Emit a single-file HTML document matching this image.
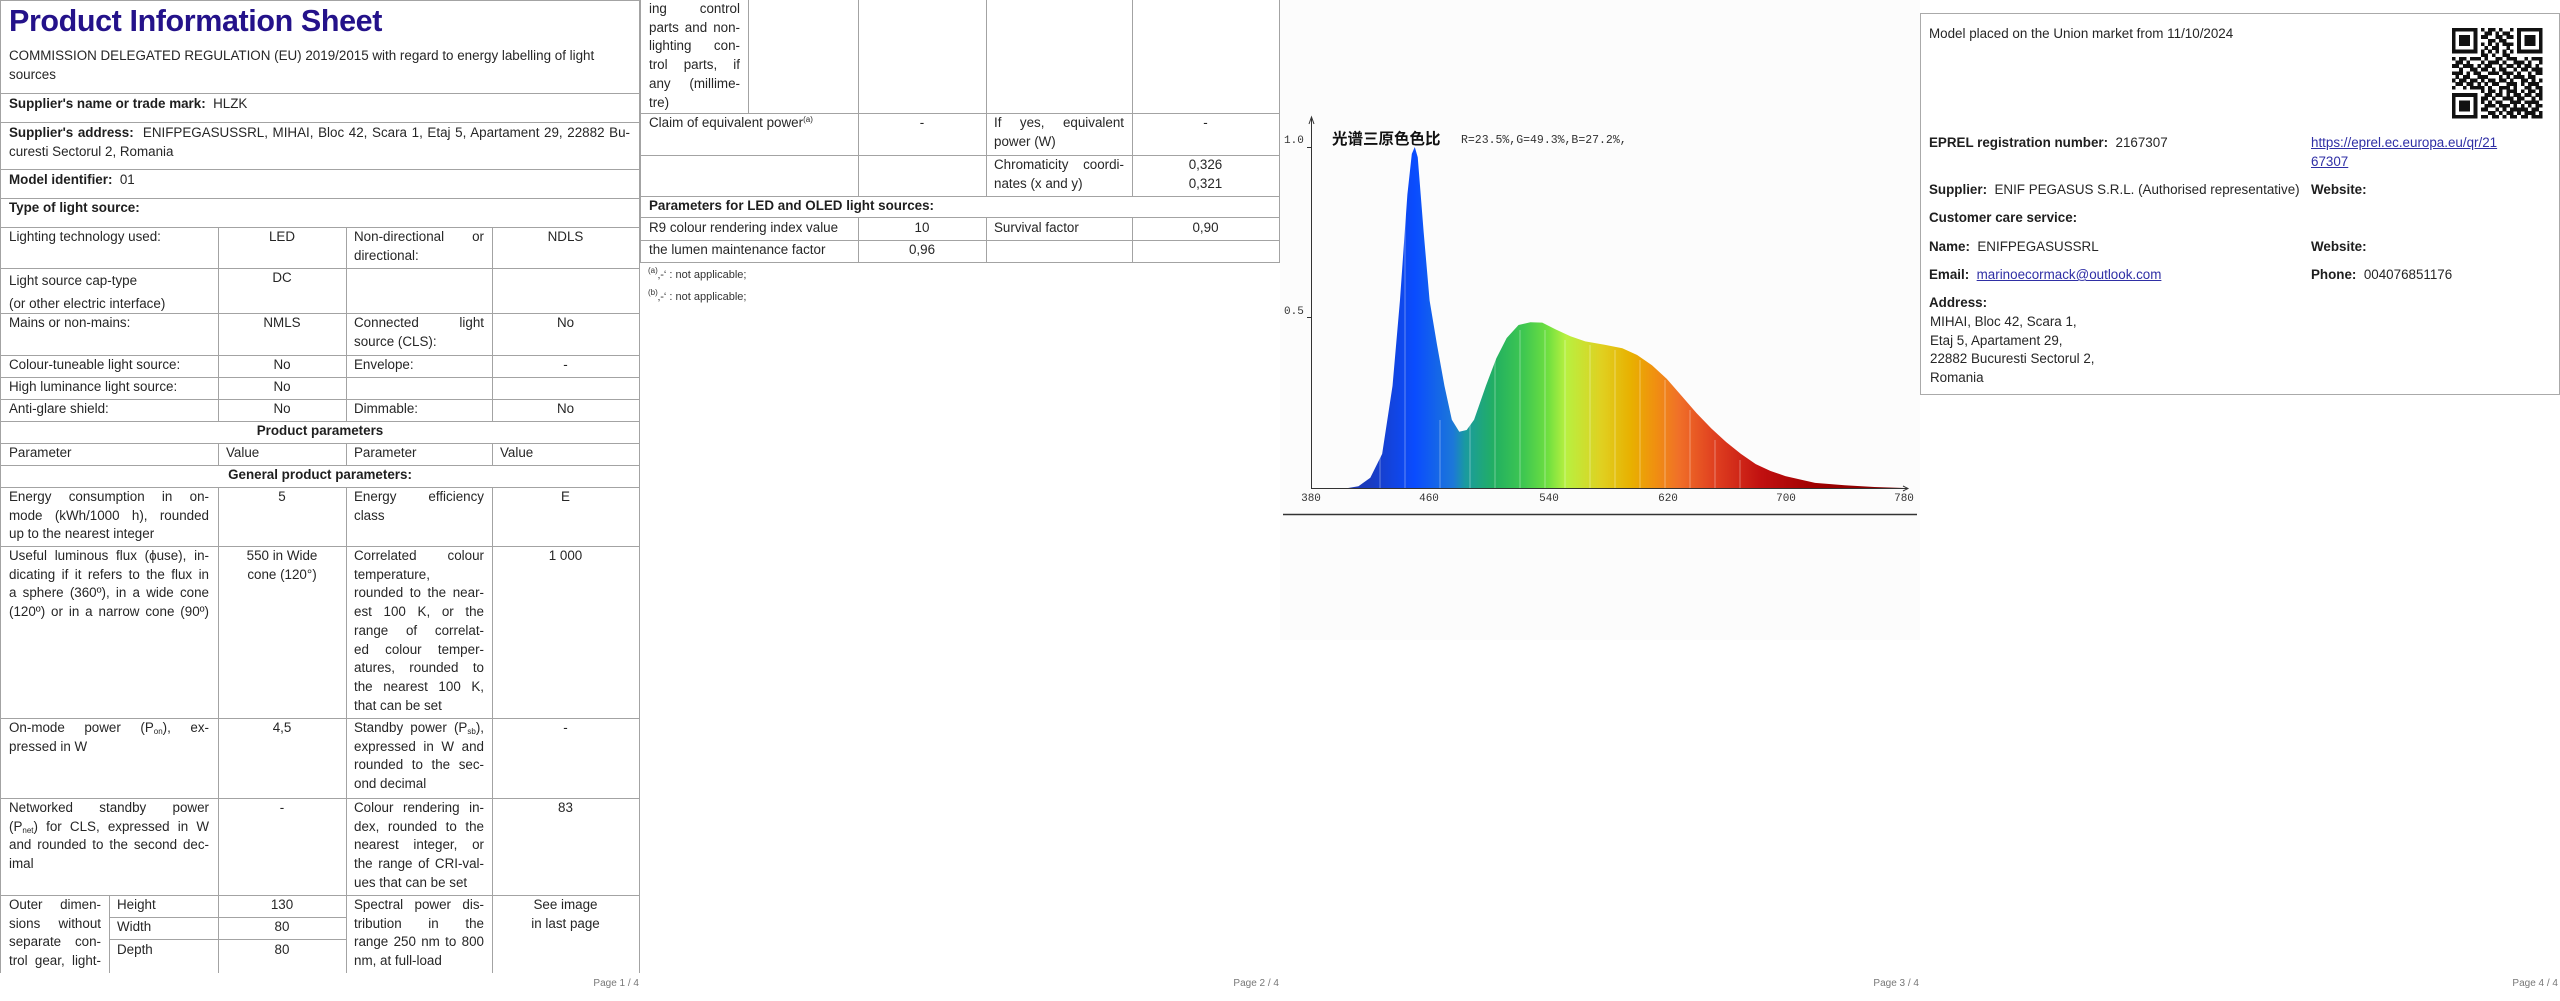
<!DOCTYPE html>
<html><head><meta charset="utf-8">
<style>
*{margin:0;padding:0;box-sizing:border-box}
html,body{width:2560px;height:1001px;background:#fff;overflow:hidden}
body{position:relative;font-family:"Liberation Sans","Noto Sans CJK SC",sans-serif;font-size:13.4px;color:#262626}
.h{position:absolute;height:1px;background:#a3a3a3}
.v{position:absolute;width:1px;background:#a3a3a3}
.t{position:absolute;line-height:18.7px;white-space:nowrap}
.j{display:block;text-align:justify;text-align-last:justify}
.c{text-align:center}
b{font-weight:bold;color:#1e1e1e}
.pg{position:absolute;top:978px;font-size:10px;color:#777;text-align:right;width:100px}
sub{font-size:8px;vertical-align:-2px;line-height:0}
sup{font-size:8px;vertical-align:5px;line-height:0}
a{color:#2f2fa5;text-decoration:underline}
</style></head><body>

<!-- ============ PAGE 1 ============ -->
<div class="v" style="left:0;top:0;height:973px"></div>
<div class="v" style="left:639px;top:0;height:973px"></div>
<div class="h" style="left:0;top:0;width:640px"></div>
<div class="h" style="left:0;top:93px;width:640px"></div>
<div class="h" style="left:0;top:122px;width:640px"></div>
<div class="h" style="left:0;top:169px;width:640px"></div>
<div class="h" style="left:0;top:198px;width:640px"></div>
<div class="h" style="left:0;top:227px;width:640px"></div>
<div class="h" style="left:0;top:268px;width:640px"></div>
<div class="h" style="left:0;top:313px;width:640px"></div>
<div class="h" style="left:0;top:355px;width:640px"></div>
<div class="h" style="left:0;top:377px;width:640px"></div>
<div class="h" style="left:0;top:399px;width:640px"></div>
<div class="h" style="left:0;top:421px;width:640px"></div>
<div class="h" style="left:0;top:443px;width:640px"></div>
<div class="h" style="left:0;top:465px;width:640px"></div>
<div class="h" style="left:0;top:487px;width:640px"></div>
<div class="h" style="left:0;top:546px;width:640px"></div>
<div class="h" style="left:0;top:718px;width:640px"></div>
<div class="h" style="left:0;top:798px;width:640px"></div>
<div class="h" style="left:0;top:895px;width:640px"></div>
<div class="h" style="left:109px;top:917px;width:237px"></div>
<div class="h" style="left:109px;top:939px;width:237px"></div>
<div class="v" style="left:218px;top:227px;height:194px"></div>
<div class="v" style="left:346px;top:227px;height:194px"></div>
<div class="v" style="left:492px;top:227px;height:194px"></div>
<div class="v" style="left:218px;top:443px;height:22px"></div>
<div class="v" style="left:346px;top:443px;height:22px"></div>
<div class="v" style="left:492px;top:443px;height:22px"></div>
<div class="v" style="left:218px;top:487px;height:486px"></div>
<div class="v" style="left:346px;top:487px;height:486px"></div>
<div class="v" style="left:492px;top:487px;height:486px"></div>
<div class="v" style="left:109px;top:895px;height:78px"></div>

<div class="t" style="left:9px;top:1px;font-size:30.5px;line-height:40px;font-weight:bold;color:#24128a;letter-spacing:-0.4px">Product Information Sheet</div>
<div class="t" style="left:9px;top:47px">COMMISSION DELEGATED REGULATION (EU) 2019/2015 with regard to energy labelling of light<br>sources</div>
<div class="t" style="left:9px;top:95px"><b>Supplier's name or trade mark:</b>&nbsp; HLZK</div>
<div class="t" style="left:9px;top:124px;width:621px"><span class="j"><b>Supplier's address:</b>&nbsp; ENIFPEGASUSSRL, MIHAI, Bloc 42, Scara 1, Etaj 5, Apartament 29, 22882 Bu-</span>curesti Sectorul 2, Romania</div>
<div class="t" style="left:9px;top:171px"><b>Model identifier:</b>&nbsp; 01</div>
<div class="t" style="left:9px;top:199px"><b>Type of light source:</b></div>

<div class="t" style="left:9px;top:228px">Lighting technology used:</div>
<div class="t c" style="left:218px;top:228px;width:128px">LED</div>
<div class="t" style="left:354px;top:228px;width:130px"><span class="j">Non-directional or</span>directional:</div>
<div class="t c" style="left:492px;top:228px;width:147px">NDLS</div>

<div class="t" style="left:9px;top:269px;line-height:23px">Light source cap-type<br>(or other electric interface)</div>
<div class="t c" style="left:218px;top:269px;width:128px">DC</div>

<div class="t" style="left:9px;top:314px">Mains or non-mains:</div>
<div class="t c" style="left:218px;top:314px;width:128px">NMLS</div>
<div class="t" style="left:354px;top:314px;width:130px"><span class="j">Connected light</span>source (CLS):</div>
<div class="t c" style="left:492px;top:314px;width:147px">No</div>

<div class="t" style="left:9px;top:356px">Colour-tuneable light source:</div>
<div class="t c" style="left:218px;top:356px;width:128px">No</div>
<div class="t" style="left:354px;top:356px">Envelope:</div>
<div class="t c" style="left:492px;top:356px;width:147px">-</div>

<div class="t" style="left:9px;top:378px">High luminance light source:</div>
<div class="t c" style="left:218px;top:378px;width:128px">No</div>

<div class="t" style="left:9px;top:400px">Anti-glare shield:</div>
<div class="t c" style="left:218px;top:400px;width:128px">No</div>
<div class="t" style="left:354px;top:400px">Dimmable:</div>
<div class="t c" style="left:492px;top:400px;width:147px">No</div>

<div class="t c" style="left:0;top:422px;width:640px"><b>Product parameters</b></div>
<div class="t" style="left:9px;top:444px">Parameter</div>
<div class="t" style="left:226px;top:444px">Value</div>
<div class="t" style="left:354px;top:444px">Parameter</div>
<div class="t" style="left:500px;top:444px">Value</div>
<div class="t c" style="left:0;top:466px;width:640px"><b>General product parameters:</b></div>

<div class="t" style="left:9px;top:488px;width:200px"><span class="j">Energy consumption in on-</span><span class="j">mode (kWh/1000 h), rounded</span>up to the nearest integer</div>
<div class="t c" style="left:218px;top:488px;width:128px">5</div>
<div class="t" style="left:354px;top:488px;width:130px"><span class="j">Energy efficiency</span>class</div>
<div class="t c" style="left:492px;top:488px;width:147px">E</div>

<div class="t" style="left:9px;top:547px;width:200px"><span class="j">Useful luminous flux (ϕuse), in-</span><span class="j">dicating if it refers to the flux in</span><span class="j">a sphere (360º), in a wide cone</span><span class="j">(120º) or in a narrow cone (90º)</span></div>
<div class="t c" style="left:218px;top:547px;width:128px">550 in Wide<br>cone (120°)</div>
<div class="t" style="left:354px;top:547px;width:130px"><span class="j">Correlated colour</span>temperature,<span class="j">rounded to the near-</span><span class="j">est 100 K, or the</span><span class="j">range of correlat-</span><span class="j">ed colour temper-</span><span class="j">atures, rounded to</span><span class="j">the nearest 100 K,</span>that can be set</div>
<div class="t c" style="left:492px;top:547px;width:147px">1 000</div>

<div class="t" style="left:9px;top:719px;width:200px"><span class="j">On-mode power (P<sub>on</sub>), ex-</span>pressed in W</div>
<div class="t c" style="left:218px;top:719px;width:128px">4,5</div>
<div class="t" style="left:354px;top:719px;width:130px"><span class="j">Standby power (P<sub>sb</sub>),</span><span class="j">expressed in W and</span><span class="j">rounded to the sec-</span>ond decimal</div>
<div class="t c" style="left:492px;top:719px;width:147px">-</div>

<div class="t" style="left:9px;top:799px;width:200px"><span class="j">Networked standby power</span><span class="j">(P<sub>net</sub>) for CLS, expressed in W</span><span class="j">and rounded to the second dec-</span>imal</div>
<div class="t c" style="left:218px;top:799px;width:128px">-</div>
<div class="t" style="left:354px;top:799px;width:130px"><span class="j">Colour rendering in-</span><span class="j">dex, rounded to the</span><span class="j">nearest integer, or</span><span class="j">the range of CRI-val-</span>ues that can be set</div>
<div class="t c" style="left:492px;top:799px;width:147px">83</div>

<div class="t" style="left:9px;top:896px;width:92px"><span class="j">Outer dimen-</span><span class="j">sions without</span><span class="j">separate con-</span><span class="j">trol gear, light-</span></div>
<div class="t" style="left:117px;top:896px">Height</div>
<div class="t" style="left:117px;top:918px">Width</div>
<div class="t" style="left:117px;top:941px">Depth</div>
<div class="t c" style="left:218px;top:896px;width:128px">130</div>
<div class="t c" style="left:218px;top:918px;width:128px">80</div>
<div class="t c" style="left:218px;top:941px;width:128px">80</div>
<div class="t" style="left:354px;top:896px;width:130px"><span class="j">Spectral power dis-</span><span class="j">tribution in the</span><span class="j">range 250 nm to 800</span>nm, at full-load</div>
<div class="t c" style="left:492px;top:896px;width:147px">See image<br>in last page</div>
<div class="pg" style="left:539px">Page 1 / 4</div>

<!-- ============ PAGE 2 ============ -->
<div class="v" style="left:640px;top:0;height:263px"></div>
<div class="v" style="left:1279px;top:0;height:263px"></div>
<div class="v" style="left:748px;top:0;height:113px"></div>
<div class="v" style="left:858px;top:0;height:196px"></div>
<div class="v" style="left:986px;top:0;height:196px"></div>
<div class="v" style="left:1132px;top:0;height:196px"></div>
<div class="v" style="left:858px;top:217px;height:45px"></div>
<div class="v" style="left:986px;top:217px;height:45px"></div>
<div class="v" style="left:1132px;top:217px;height:45px"></div>
<div class="h" style="left:640px;top:113px;width:640px"></div>
<div class="h" style="left:640px;top:155px;width:640px"></div>
<div class="h" style="left:640px;top:196px;width:640px"></div>
<div class="h" style="left:640px;top:217px;width:640px"></div>
<div class="h" style="left:640px;top:240px;width:640px"></div>
<div class="h" style="left:640px;top:262px;width:640px"></div>

<div class="t" style="left:649px;top:0;width:91px"><span class="j">ing control</span><span class="j">parts and non-</span><span class="j">lighting con-</span><span class="j">trol parts, if</span><span class="j">any (millime-</span>tre)</div>
<div class="t" style="left:649px;top:114px">Claim of equivalent power<sup>(a)</sup></div>
<div class="t c" style="left:858px;top:114px;width:128px">-</div>
<div class="t" style="left:994px;top:114px;width:130px"><span class="j">If yes, equivalent</span>power (W)</div>
<div class="t c" style="left:1132px;top:114px;width:147px">-</div>
<div class="t" style="left:994px;top:156px;width:130px"><span class="j">Chromaticity coordi-</span>nates (x and y)</div>
<div class="t c" style="left:1132px;top:156px;width:147px">0,326<br>0,321</div>
<div class="t" style="left:649px;top:197px"><b>Parameters for LED and OLED light sources:</b></div>
<div class="t" style="left:649px;top:219px">R9 colour rendering index value</div>
<div class="t c" style="left:858px;top:219px;width:128px">10</div>
<div class="t" style="left:994px;top:219px">Survival factor</div>
<div class="t c" style="left:1132px;top:219px;width:147px">0,90</div>
<div class="t" style="left:649px;top:241px">the lumen maintenance factor</div>
<div class="t c" style="left:858px;top:241px;width:128px">0,96</div>
<div class="t" style="left:648px;top:264px;font-size:11px;line-height:22px;color:#333"><sup>(a)</sup>‚-‘ : not applicable;<br><sup>(b)</sup>‚-‘ : not applicable;</div>
<div class="pg" style="left:1179px">Page 2 / 4</div>

<!-- ============ PAGE 3 ============ -->
<div style="position:absolute;left:1280px;top:0;width:640px;height:640px;background:#fcfcfc"></div>
<svg style="position:absolute;left:0;top:0" width="2560" height="1001" viewBox="0 0 2560 1001">
<defs>
<linearGradient id="sp" gradientUnits="userSpaceOnUse" x1="380" y1="0" x2="780" y2="0">
<stop offset="0" stop-color="#2030a0"/>
<stop offset="0.1" stop-color="#1a3cc0"/>
<stop offset="0.175" stop-color="#0a4cff"/>
<stop offset="0.24" stop-color="#1c78d8"/>
<stop offset="0.26" stop-color="#1a9aa0"/>
<stop offset="0.31" stop-color="#22b060"/>
<stop offset="0.36" stop-color="#40c850"/>
<stop offset="0.4" stop-color="#70e040"/>
<stop offset="0.43" stop-color="#b8f040"/>
<stop offset="0.49" stop-color="#e0d020"/>
<stop offset="0.54" stop-color="#e8b000"/>
<stop offset="0.58" stop-color="#f09010"/>
<stop offset="0.62" stop-color="#f07028"/>
<stop offset="0.68" stop-color="#e04020"/>
<stop offset="0.76" stop-color="#c01010"/>
<stop offset="0.85" stop-color="#a00000"/>
<stop offset="1" stop-color="#800000"/>
</linearGradient>
</defs>
<g transform="translate(747.65,488) scale(1.4825,-341)">
<path fill="url(#sp)" d="M380 0 L405 0 L412 0.005 L420 0.03 L428 0.1 L435 0.3 L440 0.55 L445 0.86 L448 0.98 L450 1 L452 0.97 L456 0.75 L460 0.55 L465 0.42 L470 0.3 L475 0.2 L480 0.165 L485 0.17 L490 0.2 L498 0.3 L505 0.38 L512 0.44 L520 0.478 L528 0.486 L536 0.485 L545 0.465 L555 0.445 L565 0.43 L578 0.42 L590 0.41 L600 0.39 L610 0.36 L620 0.32 L630 0.27 L640 0.22 L650 0.175 L660 0.135 L670 0.1 L680 0.07 L690 0.05 L700 0.035 L710 0.025 L720 0.015 L740 0.008 L760 0.003 L780 0 Z"/>
</g>
<g stroke="#fff" stroke-opacity="0.18" stroke-width="2">
<line x1="1380" y1="488" x2="1380" y2="300"/><line x1="1405" y1="488" x2="1405" y2="150"/><line x1="1440" y1="488" x2="1440" y2="420"/><line x1="1470" y1="488" x2="1470" y2="360"/><line x1="1495" y1="488" x2="1495" y2="330"/><line x1="1520" y1="488" x2="1520" y2="330"/><line x1="1545" y1="488" x2="1545" y2="330"/><line x1="1565" y1="488" x2="1565" y2="340"/><line x1="1590" y1="488" x2="1590" y2="345"/><line x1="1615" y1="488" x2="1615" y2="350"/><line x1="1640" y1="488" x2="1640" y2="360"/><line x1="1665" y1="488" x2="1665" y2="380"/><line x1="1690" y1="488" x2="1690" y2="410"/><line x1="1715" y1="488" x2="1715" y2="440"/><line x1="1740" y1="488" x2="1740" y2="460"/>
</g>
<line x1="1311.5" y1="118" x2="1311.5" y2="488" stroke="#333" stroke-width="1"/>
<line x1="1311" y1="488.5" x2="1907" y2="488.5" stroke="#333" stroke-width="1"/>
<path d="M1309 124 L1311.5 117 L1314 124" fill="none" stroke="#333"/>
<path d="M1903 486 L1908 488.5 L1903 491" fill="none" stroke="#333"/>
<line x1="1307" y1="147.5" x2="1311" y2="147.5" stroke="#333"/>
<line x1="1307" y1="317.5" x2="1311" y2="317.5" stroke="#333"/>
<line x1="1283" y1="514.5" x2="1917" y2="514.5" stroke="#333" stroke-width="1.5"/>
<g font-family="Liberation Mono, monospace" font-size="11" fill="#333">
<text x="1284" y="143">1.0</text>
<text x="1284" y="314">0.5</text>
<text x="1311" y="501" text-anchor="middle">380</text>
<text x="1429" y="501" text-anchor="middle">460</text>
<text x="1549" y="501" text-anchor="middle">540</text>
<text x="1668" y="501" text-anchor="middle">620</text>
<text x="1786" y="501" text-anchor="middle">700</text>
<text x="1904" y="501" text-anchor="middle">780</text>
<text x="1461" y="143" font-size="11.5">R=23.5%,G=49.3%,B=27.2%,</text>
</g>
<text x="1332" y="144" font-family="Noto Sans CJK SC, sans-serif" font-weight="bold" font-size="15.5" fill="#111">光谱三原色色比</text>

<!-- QR -->
<g transform="translate(2452,28) scale(3.62)" stroke="#111" stroke-width="1.04" shape-rendering="crispEdges">
<line x1="0" x2="25" y1="0.5" y2="0.5" stroke-dasharray="7 1 1 1 2 1 1 2 1 1 7"/>
<line x1="0" x2="25" y1="1.5" y2="1.5" stroke-dasharray="1 5 1 2 2 1 1 1 2 2 1 5 1"/>
<line x1="0" x2="25" y1="2.5" y2="2.5" stroke-dasharray="1 1 3 1 1 1 2 2 2 1 2 1 1 1 3 1 1"/>
<line x1="0" x2="25" y1="3.5" y2="3.5" stroke-dasharray="1 1 3 1 1 3 2 1 2 3 1 1 3 1 1"/>
<line x1="0" x2="25" y1="4.5" y2="4.5" stroke-dasharray="1 1 3 1 1 1 1 1 1 1 1 1 3 1 1 1 3 1 1"/>
<line x1="0" x2="25" y1="5.5" y2="5.5" stroke-dasharray="1 5 1 2 1 1 2 2 1 2 1 5 1"/>
<line x1="0" x2="25" y1="6.5" y2="6.5" stroke-dasharray="7 1 1 1 1 1 1 1 1 1 1 1 7"/>
<line x1="0" x2="25" y1="7.5" y2="7.5" stroke-dasharray="0 8 2 1 1 2 2 9"/>
<line x1="0" x2="25" y1="8.5" y2="8.5" stroke-dasharray="1 1 2 1 3 1 1 2 2 1 3 2 1 1 3"/>
<line x1="0" x2="25" y1="9.5" y2="9.5" stroke-dasharray="0 1 2 1 1 3 1 1 3 1 1 2 3 1 1 2 1"/>
<line x1="0" x2="25" y1="10.5" y2="10.5" stroke-dasharray="2 1 3 1 1 1 2 2 1 1 2 1 1 1 2 1 1 1"/>
<line x1="0" x2="25" y1="11.5" y2="11.5" stroke-dasharray="0 2 1 2 2 1 2 1 1 1 2 2 1 1 2 1 3"/>
<line x1="0" x2="25" y1="12.5" y2="12.5" stroke-dasharray="3 1 1 1 2 2 3 1 3 1 1 2 1 1 2"/>
<line x1="0" x2="25" y1="13.5" y2="13.5" stroke-dasharray="0 1 1 1 2 2 3 3 1 1 1 1 3 1 2 2"/>
<line x1="0" x2="25" y1="14.5" y2="14.5" stroke-dasharray="1 1 2 1 2 1 1 1 2 1 2 1 1 2 2 1 1 1 1"/>
<line x1="0" x2="25" y1="15.5" y2="15.5" stroke-dasharray="0 1 2 1 2 1 1 1 1 1 2 2 3 1 1 1 3 1"/>
<line x1="0" x2="25" y1="16.5" y2="16.5" stroke-dasharray="1 2 1 1 4 1 1 2 3 1 1 2 2 1 2"/>
<line x1="0" x2="25" y1="17.5" y2="17.5" stroke-dasharray="0 8 1 1 2 1 1 1 3 1 1 1 2 1 1"/>
<line x1="0" x2="25" y1="18.5" y2="18.5" stroke-dasharray="7 2 2 1 2 1 1 1 2 1 2 1 2"/>
<line x1="0" x2="25" y1="19.5" y2="19.5" stroke-dasharray="1 5 1 1 2 1 1 2 3 1 2 2 1 1 1"/>
<line x1="0" x2="25" y1="20.5" y2="20.5" stroke-dasharray="1 1 3 1 1 1 1 1 1 1 2 2 3 1 4 1"/>
<line x1="0" x2="25" y1="21.5" y2="21.5" stroke-dasharray="1 1 3 1 1 2 3 1 3 1 1 1 1 1 1 1 2"/>
<line x1="0" x2="25" y1="22.5" y2="22.5" stroke-dasharray="1 1 3 1 1 1 2 2 1 1 1 1 5 1 2 1"/>
<line x1="0" x2="25" y1="23.5" y2="23.5" stroke-dasharray="1 5 1 3 2 1 1 1 2 1 1 1 3 1 1"/>
<line x1="0" x2="25" y1="24.5" y2="24.5" stroke-dasharray="7 1 2 1 2 1 1 1 2 1 2 1 3"/>
</g>
</svg>
<div class="pg" style="left:1819px">Page 3 / 4</div>

<!-- ============ PAGE 4 ============ -->
<div style="position:absolute;left:1920px;top:13px;width:640px;height:382px;border:1px solid #aaa"></div>
<div class="t" style="left:1929px;top:25px">Model placed on the Union market from 11/10/2024</div>
<div class="t" style="left:1929px;top:134px"><b>EPREL registration number:</b>&nbsp; 2167307</div>
<div class="t" style="left:2311px;top:134px"><a>https://eprel.ec.europa.eu/qr/21</a><br><a>67307</a></div>
<div class="t" style="left:1929px;top:181px"><b>Supplier:</b>&nbsp; ENIF PEGASUS S.R.L. (Authorised representative)</div>
<div class="t" style="left:2311px;top:181px"><b>Website:</b></div>
<div class="t" style="left:1929px;top:209px"><b>Customer care service:</b></div>
<div class="t" style="left:1929px;top:238px"><b>Name:</b>&nbsp; ENIFPEGASUSSRL</div>
<div class="t" style="left:2311px;top:238px"><b>Website:</b></div>
<div class="t" style="left:1929px;top:266px"><b>Email:</b>&nbsp; <a>marinoecormack@outlook.com</a></div>
<div class="t" style="left:2311px;top:266px"><b>Phone:</b>&nbsp; 004076851176</div>
<div class="t" style="left:1929px;top:294px"><b>Address:</b></div>
<div class="t" style="left:1930px;top:313px">MIHAI, Bloc 42, Scara 1,<br>Etaj 5, Apartament 29,<br>22882 Bucuresti Sectorul 2,<br>Romania</div>
<div class="pg" style="left:2458px">Page 4 / 4</div>
</body></html>
